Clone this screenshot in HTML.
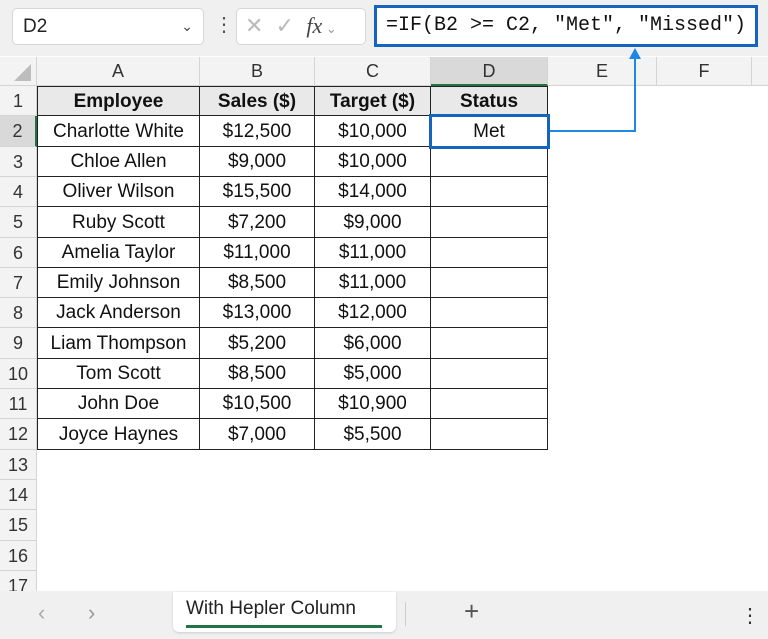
<!DOCTYPE html>
<html><head><style>
*{margin:0;padding:0;box-sizing:border-box}
body{width:768px;height:639px;overflow:hidden;background:#fff;font-family:"Liberation Sans Narrow","Liberation Sans",sans-serif;position:relative;color:#222}
.a{position:absolute}
.top{left:0;top:0;width:768px;height:56px;background:#f0f0f0}
.box{background:#fff;border:1px solid #d6d6d6;border-radius:5px}
.ch{top:57px;height:29px;background:#f3f3f3;border-right:1px solid #d4d4d4;border-bottom:1px solid #d4d4d4;text-align:center;font-size:18px;line-height:29px;color:#333}
.rh{left:0;width:37px;background:#f3f3f3;border-bottom:1px solid #d4d4d4;border-right:1px solid #d4d4d4;text-align:center;font-size:18px;color:#333}
.c{border-right:1px solid #222;border-bottom:1px solid #222;text-align:center;font-size:19px;white-space:nowrap;overflow:hidden;color:#111}
</style></head><body>
<div class="a top"></div>
<div class="a box" style="left:12px;top:8px;width:192px;height:37px;font-size:19px;line-height:35px;padding-left:10px">D2<span style="position:absolute;right:10px;top:0;font-size:14px;color:#444">&#8964;</span></div>
<div class="a" style="left:214px;top:12px;font-size:20px;color:#555">&#8942;</div>
<div class="a box" style="left:236px;top:8px;width:130px;height:37px;color:#bbb;font-size:22px;line-height:34px;padding-left:8px">&#10005;&nbsp;&nbsp;&#10003;&nbsp;&nbsp;<i style="font-family:'Liberation Serif',serif;color:#444">fx</i><span style="font-size:13px;color:#999"> &#8964;</span></div>
<div class="a" style="left:374px;top:5px;width:384px;height:42px;border:3px solid #1565c0;background:#fff;font-family:'Liberation Mono',monospace;font-size:20px;line-height:36px;padding-left:9px;color:#111;white-space:nowrap;overflow:hidden">=IF(B2 &gt;= C2, "Met", "Missed")</div>
<div class="a" style="left:0;top:57px;width:37px;height:29px;background:#f3f3f3;border-right:1px solid #d4d4d4;border-bottom:1px solid #d4d4d4"><div style="position:absolute;right:5px;bottom:4px;width:0;height:0;border-left:17px solid transparent;border-bottom:17px solid #bdbdbd"></div></div>
<div class="a ch" style="left:37px;width:163px">A</div>
<div class="a ch" style="left:200px;width:115px">B</div>
<div class="a ch" style="left:315px;width:116px">C</div>
<div class="a ch" style="left:431px;width:117px;background:#d9d9d9;border-bottom:2px solid #217346">D</div>
<div class="a ch" style="left:548px;width:109px">E</div>
<div class="a ch" style="left:657px;width:95px">F</div>
<div class="a ch" style="left:752px;width:16px;border-right:none"></div>
<div id="g"></div>
<script>
var d=[["Employee","Sales ($)","Target ($)","Status"],["Charlotte White","$12,500","$10,000","Met"],["Chloe Allen","$9,000","$10,000",""],["Oliver Wilson","$15,500","$14,000",""],["Ruby Scott","$7,200","$9,000",""],["Amelia Taylor","$11,000","$11,000",""],["Emily Johnson","$8,500","$11,000",""],["Jack Anderson","$13,000","$12,000",""],["Liam Thompson","$5,200","$6,000",""],["Tom Scott","$8,500","$5,000",""],["John Doe","$10,500","$10,900",""],["Joyce Haynes","$7,000","$5,500",""]];
var xs=[37,200,315,431,548],h="";
for(var r=0;r<17;r++){var t=Math.round(86+r*30.3),b=Math.round(86+(r+1)*30.3),hh=b-t;
h+='<div class="a rh" style="top:'+t+'px;height:'+hh+'px;line-height:'+hh+'px;'+(r==1?'background:#d9d9d9;border-right:2px solid #217346;':'')+'">'+(r+1)+'</div>';
if(r<12){for(var c=0;c<4;c++){h+='<div class="a c" style="left:'+xs[c]+'px;top:'+t+'px;width:'+(xs[c+1]-xs[c])+'px;height:'+hh+'px;line-height:'+hh+'px;'+(r==0?'background:#e9e9e9;font-weight:bold;border-top:1px solid #222;':'')+(c==0?'border-left:1px solid #222;':'')+'">'+d[r][c]+'</div>';}}}
document.getElementById('g').innerHTML=h;
</script>
<div class="a" style="left:429px;top:114px;width:121px;height:35px;border:3px solid #1565c0"></div>
<div class="a" style="left:550px;top:130px;width:86px;height:2px;background:#1e88e5"></div>
<div class="a" style="left:634px;top:56px;width:2px;height:76px;background:#1e88e5"></div>
<div class="a" style="left:629px;top:48px;width:0;height:0;border-left:6px solid transparent;border-right:6px solid transparent;border-bottom:11px solid #1e88e5"></div>
<div class="a" style="left:0;top:591px;width:768px;height:48px;background:#f0f0f0"></div>
<div class="a" style="left:38px;top:600px;font-size:22px;color:#aaa">&#8249;</div>
<div class="a" style="left:88px;top:600px;font-size:22px;color:#999">&#8250;</div>
<div class="a" style="left:173px;top:592px;width:223px;height:40px;background:#fff;border-radius:0 0 6px 6px;box-shadow:0 1px 2px #ccc"></div>
<div class="a" style="left:186px;top:598px;font-size:19px;color:#222">With Hepler Column</div>
<div class="a" style="left:186px;top:625px;width:196px;height:3px;background:#217346"></div>
<div class="a" style="left:405px;top:602px;width:1px;height:24px;background:#ccc"></div>
<div class="a" style="left:464px;top:596px;font-size:26px;color:#555;font-family:'Liberation Sans',sans-serif">+</div>
<div class="a" style="left:740px;top:603px;font-size:20px;color:#333">&#8942;</div>
</body></html>
